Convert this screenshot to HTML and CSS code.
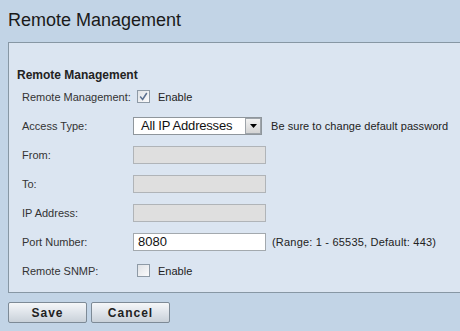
FILE: index.html
```html
<!DOCTYPE html>
<html lang="en">
<head>
    <meta charset="UTF-8">
    <title>Remote Management</title>
    <link rel="stylesheet" href="styles.css">
</head>
<body>
    <h1 class="page-title">Remote Management</h1>

    <div class="panel">
        <h2 class="section-title">Remote Management</h2>

        <div class="row">
            <span class="label">Remote Management:</span>
            <span class="check-wrap">
                <span class="checkbox">
                    <svg width="9" height="9" viewBox="0 0 9 9"><path d="M1.2 4.6 L3.6 7.4 L7.8 1" fill="none" stroke="#5b7090" stroke-width="1.5"/></svg>
                </span>
                <span class="check-text">Enable</span>
            </span>
        </div>

        <div class="row">
            <span class="label">Access Type:</span>
            <span class="select-box">
                <span class="select-value">All IP Addresses</span>
                <span class="select-arrow">
                    <svg width="7" height="4" viewBox="0 0 7 4"><path d="M0 0 H7 L3.5 4 Z" fill="#000"/></svg>
                </span>
            </span>
            <span class="hint hint-note">Be sure to change default password</span>
        </div>

        <div class="row">
            <span class="label">From:</span>
            <input class="text-input" type="text" disabled>
        </div>

        <div class="row">
            <span class="label">To:</span>
            <input class="text-input" type="text" disabled>
        </div>

        <div class="row">
            <span class="label">IP Address:</span>
            <input class="text-input" type="text" disabled>
        </div>

        <div class="row">
            <span class="label">Port Number:</span>
            <input class="text-input" type="text" value="8080">
            <span class="hint hint-range">(Range: 1 - 65535, Default: 443)</span>
        </div>

        <div class="row">
            <span class="label">Remote SNMP:</span>
            <span class="check-wrap">
                <span class="checkbox"></span>
                <span class="check-text">Enable</span>
            </span>
        </div>
    </div>

    <div class="buttons">
        <button class="btn">Save</button>
        <button class="btn">Cancel</button>
    </div>
</body>
</html>
```

FILE: styles.css
```css
body {
    margin: 0;
    padding: 8px 0 0 8px;
    background-color: #c2d4e6;
    font-family: 'Liberation Sans', Arial, sans-serif;
    color: #222;
    overflow: hidden;
}
.page-title {
    margin: 1px 0 11px 0;
    font-size: 18px;
    line-height: 22px;
    font-weight: normal;
    color: #1a1a1a;
}
/* panel runs off the right edge, so no right border */
.panel {
    background-color: #dbe5f1;
    border-top: 1px solid #8797a4;
    border-left: 1px solid #8797a4;
    border-bottom: 1px solid #8797a4;
    padding: 25px 0 7px 13px;
}
.section-title {
    margin: 0 0 0 -5px;
    font-size: 12px;
    line-height: 14px;
    font-weight: bold;
    color: #222;
}
.row {
    display: flex;
    align-items: center;
    height: 29px;
    font-size: 11px;
}
.label {
    width: 111px;
    flex-shrink: 0;
    color: #333;
}
.check-wrap {
    display: flex;
    align-items: center;
    margin-left: 4px;
}
.checkbox {
    width: 11px;
    height: 11px;
    border: 1px solid #8e9aa6;
    background: linear-gradient(135deg, #dfe2e6, #fbfbfc);
    display: flex;
    align-items: center;
    justify-content: center;
}
.check-text {
    margin-left: 8px;
    color: #222;
}
.select-box {
    display: flex;
    width: 127px;
    height: 16px;
    border: 1px solid #8f969c;
    background-color: #fff;
}
.select-value {
    flex: 1;
    padding-left: 7px;
    font-size: 13px;
    line-height: 16px;
    letter-spacing: -0.2px;
    color: #111;
}
.select-arrow {
    width: 14px;
    border: 1px solid #9ea4aa;
    background: linear-gradient(#f2f2f2, #d4d4d4);
    display: flex;
    align-items: center;
    justify-content: center;
}
.hint {
    color: #222;
}
.hint-note {
    margin-left: 9px;
    letter-spacing: 0.05px;
}
.hint-range {
    margin-left: 6px;
    letter-spacing: 0.2px;
}
.text-input {
    box-sizing: border-box;
    width: 133px;
    height: 18px;
    margin: 0;
    padding: 0 4px;
    border: 1px solid #a3a9ae;
    background-color: #fff;
    font-family: 'Liberation Sans', Arial, sans-serif;
    font-size: 13px;
    color: #111;
}
.text-input:disabled {
    background-color: #dfdfdf;
    border-color: #b0b4b8;
}
.buttons {
    display: flex;
    gap: 4px;
    margin-top: 9px;
}
.btn {
    width: 79px;
    height: 21px;
    padding: 0;
    border: 1px solid #7d8a96;
    border-radius: 2px;
    background: linear-gradient(#f5f7f9, #dfe4ea 50%, #c9d1d9);
    font-family: 'Liberation Sans', Arial, sans-serif;
    font-size: 12px;
    font-weight: bold;
    letter-spacing: 1px;
    color: #222;
}
```
